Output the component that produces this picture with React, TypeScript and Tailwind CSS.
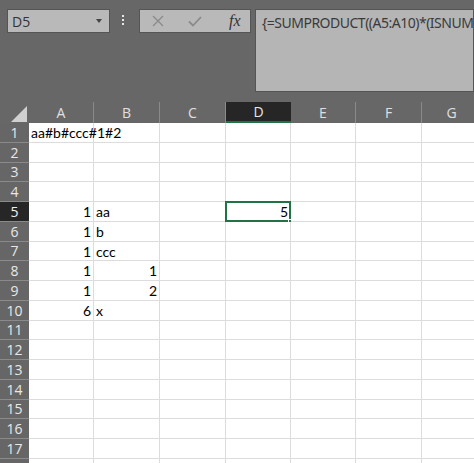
const COLS = ['A', 'B', 'C', 'D', 'E', 'F', 'G'];
const WIDTHS = ['w-[65px]', 'w-[66px]', 'w-[66px]', 'w-[65px]', 'w-[65px]', 'w-[66px]', 'w-[60px]'];

type Cell = { v: string; right?: boolean };
const DATA: Record<number, Record<string, Cell>> = {
  1: { A: { v: 'aa#b#ccc#1#2' } },
  5: { A: { v: '1', right: true }, B: { v: 'aa' }, D: { v: '5', right: true } },
  6: { A: { v: '1', right: true }, B: { v: 'b' } },
  7: { A: { v: '1', right: true }, B: { v: 'ccc' } },
  8: { A: { v: '1', right: true }, B: { v: '1', right: true } },
  9: { A: { v: '1', right: true }, B: { v: '2', right: true } },
  10: { A: { v: '6', right: true }, B: { v: 'x' } },
};

const ROWS = Array.from({ length: 18 }, (_, i) => i + 1);

function NameBox() {
  return (
    <div className="ml-[7px] flex h-[24px] w-[103px] items-center justify-between border border-[#555] bg-[#b9b9b9] pl-[4px] pr-[7px] text-[14px] text-[#333]">
      <span>D5</span>
      <svg width="6" height="4" viewBox="0 0 6 4">
        <path d="M0 0h6L3 4z" fill="#444" />
      </svg>
    </div>
  );
}

function FormulaButtons() {
  return (
    <div className="flex h-[24px] w-[112px] items-center border border-[#555] bg-[#b9b9b9]">
      <svg className="ml-[12px]" width="12" height="12" viewBox="0 0 12 12">
        <path d="M1 1l10 10M11 1L1 11" stroke="#8a8a8a" strokeWidth="1.3" />
      </svg>
      <svg className="ml-[24px]" width="14" height="11" viewBox="0 0 14 11">
        <path d="M1 5.5l4 4L13 1" stroke="#8a8a8a" strokeWidth="1.8" fill="none" />
      </svg>
      <span className="ml-[27px] font-['Liberation_Serif'] text-[16px] italic text-[#333]">
        fx
      </span>
    </div>
  );
}

export default function App() {
  return (
    <div className="h-[463px] w-[474px] overflow-hidden bg-[#676767] font-['Open_Sans',sans-serif]">
      <div className="flex items-start pt-[9px]">
        <NameBox />
        <div className="ml-[12px] mr-[15px] mt-[6px] flex flex-col gap-[2px]">
          <div className="h-[2px] w-[2px] bg-[#e8e8e8]" />
          <div className="h-[2px] w-[2px] bg-[#e8e8e8]" />
          <div className="h-[2px] w-[2px] bg-[#e8e8e8]" />
        </div>
        <FormulaButtons />
        <div className="ml-[4px] h-[83px] min-w-0 flex-1 overflow-hidden border border-[#555] bg-[#b5b5b5] pl-[6px] pt-[2px] font-['Noto_Sans',sans-serif] text-[14px] tracking-[-0.5px] whitespace-nowrap text-[#3a3a3a]">
          {'{=SUMPRODUCT((A5:A10)*(ISNUM'}
        </div>
      </div>

      <div className="mt-[10px]">
        <div className="flex h-[21px]">
          <div className="relative w-[29px] shrink-0">
            <svg className="absolute bottom-[1px] right-[2px]" width="16" height="16" viewBox="0 0 16 16">
              <path d="M16 0v16H0z" fill="#d0d0d0" />
            </svg>
          </div>
          {COLS.map((c, i) => (
            <div
              key={c}
              className={`${WIDTHS[i]} flex shrink-0 items-center justify-center text-[14px] ${
                c === 'D'
                  ? 'border-b-2 border-[#217346] bg-[#262626] text-[#e6e6e6]'
                  : 'border-r border-[#8a8a8a] text-[#e0e0e0]'
              }`}
            >
              {c}
            </div>
          ))}
        </div>

        {ROWS.map((r) => (
          <div key={r} className="flex h-[19.75px]">
            <div
              className={`flex w-[29px] shrink-0 items-center justify-center border-b border-[#8a8a8a] text-[14px] ${
                r === 5 ? 'bg-[#262626] text-[#f0f0f0]' : 'bg-[#666] text-[#e8e8e8]'
              }`}
            >
              {r < 18 ? r : ''}
            </div>
            {COLS.map((c, i) => {
              const cell = DATA[r]?.[c];
              const selected = r === 5 && c === 'D';
              return (
                <div
                  key={c}
                  className={`${WIDTHS[i]} relative shrink-0 border-r border-b border-[#dcdcdc] bg-white font-['Lato',sans-serif] text-[14px] leading-[19px] text-black whitespace-nowrap ${
                    cell?.right ? 'pr-[2px] text-right' : 'pl-[2px]'
                  } ${r === 1 && c === 'A' ? 'overflow-visible z-10' : ''}`}
                >
                  {cell?.v}
                  {selected && (
                    <div className="pointer-events-none absolute -left-[1px] -top-[1px] -right-[1px] -bottom-[1px] border-2 border-[#217346]">
                      <div className="absolute -bottom-[4px] -right-[4px] h-[5px] w-[5px] border border-white bg-[#217346]" />
                    </div>
                  )}
                </div>
              );
            })}
          </div>
        ))}
      </div>
    </div>
  );
}
